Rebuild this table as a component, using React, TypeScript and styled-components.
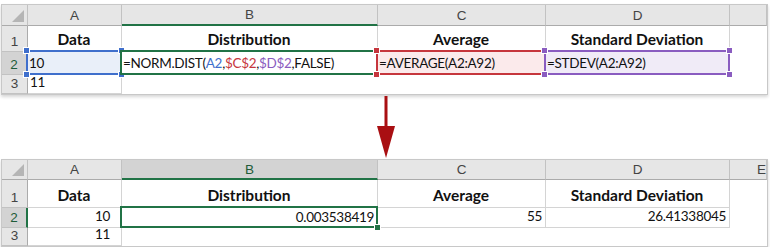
import React from 'react';
import styled, { createGlobalStyle } from 'styled-components';

const GlobalStyle = createGlobalStyle`
  html, body {
    margin: 0;
    padding: 0;
    background: #fff;
  }
  body {
    font-family: Lato, "Liberation Sans", Arial, sans-serif;
  }
`;

const GREEN = '#217346';
const COLS = '26px 94px 256px 168px 184px 1fr';

const Page = styled.div`
  width: 770px;
  padding: 4px 2px 0 1px;
  box-sizing: border-box;
  display: flex;
  flex-direction: column;
`;

const Sheet = styled.div<{ $rows: string }>`
  display: grid;
  grid-template-columns: ${COLS};
  grid-template-rows: ${(p) => p.$rows};
  border: 1px solid #c8c8c8;
  box-shadow: 0 2px 3px rgba(0, 0, 0, 0.16);
  background: #fff;
  overflow: hidden;
`;

const ColHead = styled.div<{ $active?: boolean; $marked?: boolean; $left?: boolean }>`
  display: flex;
  align-items: center;
  justify-content: ${(p) => (p.$left ? 'flex-start' : 'center')};
  padding-left: ${(p) => (p.$left ? '27px' : '0')};
  background: ${(p) => (p.$active ? '#d3d3d3' : '#e6e6e6')};
  border-right: 1px solid #c2c2c2;
  border-bottom: ${(p) => (p.$marked ? `2px solid ${GREEN}` : '1px solid #ababab')};
  color: ${(p) => (p.$active ? '#1e5c39' : '#444')};
  font-family: "Liberation Sans", Arial, sans-serif;
  font-size: 13.5px;
  box-sizing: border-box;
`;

const Corner = styled(ColHead)`
  position: relative;
  &::after {
    content: '';
    position: absolute;
    right: 3px;
    bottom: 3px;
    border-style: solid;
    border-width: 0 0 12px 12px;
    border-color: transparent transparent #b5b5b5 transparent;
  }
`;

const RowHead = styled.div<{ $active?: boolean }>`
  display: flex;
  align-items: flex-end;
  justify-content: center;
  padding-bottom: 2px;
  background: ${(p) => (p.$active ? '#d3d3d3' : '#e6e6e6')};
  border-right: ${(p) => (p.$active ? `2px solid ${GREEN}` : '1px solid #ababab')};
  border-bottom: 1px solid #c2c2c2;
  color: ${(p) => (p.$active ? '#1e5c39' : '#444')};
  font-family: "Liberation Sans", Arial, sans-serif;
  font-size: 13.5px;
  box-sizing: border-box;
`;

const Cell = styled.div<{
  $align?: 'left' | 'right' | 'center';
  $bold?: boolean;
  $bare?: boolean;
  $inset?: number;
}>`
  position: relative;
  display: flex;
  align-items: flex-end;
  justify-content: ${(p) =>
    p.$align === 'right' ? 'flex-end' : p.$align === 'center' ? 'center' : 'flex-start'};
  padding: 0 ${(p) => p.$inset ?? 3}px 3px 2px;
  border-right: ${(p) => (p.$bare ? 'none' : '1px solid #d4d4d4')};
  border-bottom: ${(p) => (p.$bare ? 'none' : '1px solid #d4d4d4')};
  font-size: ${(p) => (p.$bold ? '15.5px' : '13.5px')};
  letter-spacing: ${(p) => (p.$bold ? '0' : '-0.3px')};
  font-weight: ${(p) => (p.$bold ? 700 : 400)};
  color: #111;
  white-space: nowrap;
  box-sizing: border-box;
`;

const Range = styled.div<{ $color: string; $fill: string; $align?: 'left' | 'right' }>`
  position: absolute;
  top: -2px;
  left: -2px;
  right: -1px;
  bottom: -1px;
  z-index: 1;
  display: flex;
  align-items: center;
  justify-content: ${(p) => (p.$align === 'right' ? 'flex-end' : 'flex-start')};
  padding: 0 2px 0 1px;
  border: 2px solid ${(p) => p.$color};
  background: ${(p) => p.$fill};
  box-sizing: border-box;
`;

const Handle = styled.span<{ $color: string; $at: 'tl' | 'tr' | 'bl' | 'br' }>`
  position: absolute;
  width: 5px;
  height: 5px;
  background: ${(p) => p.$color};
  border: 1px solid #fff;
  z-index: 2;
  ${(p) => (p.$at[0] === 't' ? 'top: -5px;' : 'bottom: -5px;')}
  ${(p) => (p.$at[1] === 'l' ? 'left: -5px;' : 'right: -5px;')}
`;

const Ref = styled.span<{ $color: string }>`
  color: ${(p) => p.$color};
`;

const ArrowRow = styled.div`
  height: 64px;
  display: flex;
  justify-content: center;
  padding-left: 2px;
`;

const BLUE = '#3f6fcc';
const RED = '#c6363d';
const PURPLE = '#8a5cc0';

type Corners = Array<'tl' | 'tr' | 'bl' | 'br'>;

function Handles({ color, at }: { color: string; at: Corners }) {
  return (
    <>
      {at.map((a) => (
        <Handle key={a} $color={color} $at={a} />
      ))}
    </>
  );
}

const all: Corners = ['tl', 'tr', 'bl', 'br'];

function Headers({ active, showE }: { active?: boolean; showE?: boolean }) {
  return (
    <>
      <Corner />
      <ColHead>A</ColHead>
      <ColHead $active={active} $marked>
        B
      </ColHead>
      <ColHead>C</ColHead>
      <ColHead>D</ColHead>
      <ColHead $left>{showE ? 'E' : ''}</ColHead>
    </>
  );
}

function TitleRow() {
  return (
    <>
      <RowHead>1</RowHead>
      <Cell $align="center" $bold>Data</Cell>
      <Cell $align="center" $bold>Distribution</Cell>
      <Cell $align="center" $bold>Average</Cell>
      <Cell $align="center" $bold>Standard Deviation</Cell>
      <Cell $bare />
    </>
  );
}

export default function App() {
  return (
    <Page>
      <GlobalStyle />
      <Sheet $rows="21px 26px 23px 19px">
        <Headers />
        <TitleRow />

        <RowHead $active>2</RowHead>
        <Cell>
          <Range $color={BLUE} $fill="#e9eff9">
            10
            <Handles color={BLUE} at={all} />
          </Range>
        </Cell>
        <Cell>
          <Range $color={GREEN} $fill="#fff">
            =NORM.DIST(<Ref $color={BLUE}>A2</Ref>,<Ref $color={RED}>$C$2</Ref>,
            <Ref $color={PURPLE}>$D$2</Ref>,FALSE)
          </Range>
        </Cell>
        <Cell>
          <Range $color={RED} $fill="#fbeaeb">
            =AVERAGE(A2:A92)
            <Handles color={RED} at={all} />
          </Range>
        </Cell>
        <Cell>
          <Range $color={PURPLE} $fill="#f0ebf7">
            =STDEV(A2:A92)
            <Handles color={PURPLE} at={all} />
          </Range>
        </Cell>
        <Cell $bare />

        <RowHead>3</RowHead>
        <Cell>11</Cell>
        <Cell $bare />
        <Cell $bare />
        <Cell $bare />
        <Cell $bare />
      </Sheet>

      <ArrowRow>
        <svg width="20" height="64" viewBox="0 0 20 64">
          <rect x="8.5" y="1" width="3" height="32" fill="#a90f12" />
          <polygon points="1,31 19,31 10,63" fill="#a90f12" />
        </svg>
      </ArrowRow>

      <Sheet $rows="20px 28px 20px 18px">
        <Headers active showE />
        <TitleRow />

        <RowHead $active>2</RowHead>
        <Cell $align="right" $inset={11}>10</Cell>
        <Cell>
          <Range $color={GREEN} $fill="#fff" $align="right">
            0.003538419
            <Handles color={GREEN} at={['br']} />
          </Range>
        </Cell>
        <Cell $align="right">55</Cell>
        <Cell $align="right">26.41338045</Cell>
        <Cell $bare />

        <RowHead>3</RowHead>
        <Cell $align="right" $inset={11}>11</Cell>
        <Cell $bare />
        <Cell $bare />
        <Cell $bare />
        <Cell $bare />
      </Sheet>
    </Page>
  );
}
